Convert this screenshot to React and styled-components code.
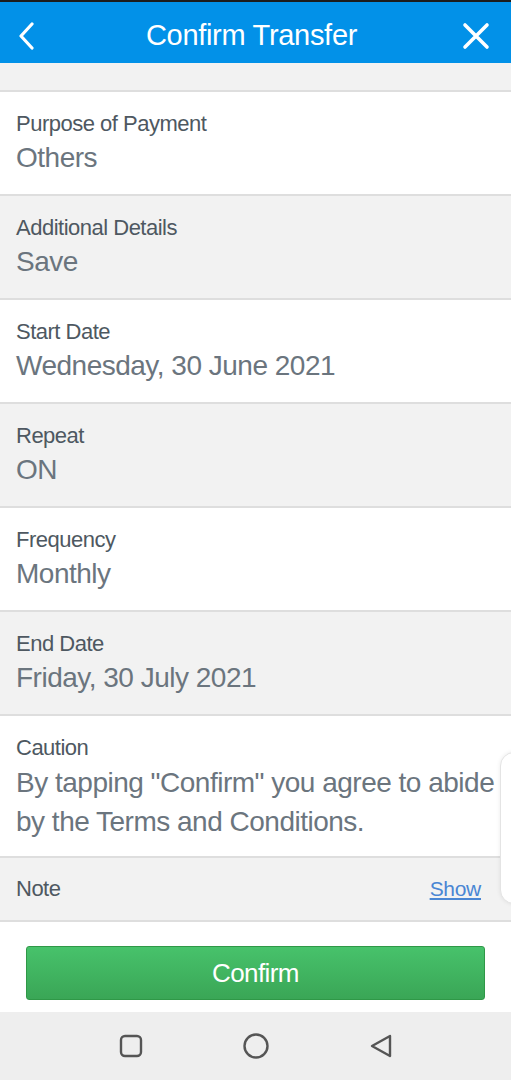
import React from "react";
import styled, { createGlobalStyle } from "styled-components";

const GlobalStyle = createGlobalStyle`
  html, body {
    margin: 0;
    padding: 0;
    background: #ffffff;
  }
  body {
    font-family: "Liberation Sans", Arial, sans-serif;
    -webkit-font-smoothing: antialiased;
  }
`;

const Screen = styled.div`
  width: 511px;
  height: 1080px;
  display: flex;
  flex-direction: column;
  position: relative;
  overflow: hidden;
  background: #ffffff;
`;

const StatusLine = styled.div`
  height: 2px;
  background: #1c1c1c;
`;

const Header = styled.header`
  height: 61px;
  box-sizing: border-box;
  background: #0291e8;
  display: flex;
  align-items: center;
  justify-content: space-between;
  padding: 6px 20px 0 12px;
  color: #ffffff;
`;

const Title = styled.h1`
  margin: 0;
  font-size: 29px;
  font-weight: 400;
  letter-spacing: -0.3px;
`;

const IconButton = styled.button`
  width: 30px;
  height: 30px;
  padding: 0;
  border: none;
  background: none;
  display: flex;
  align-items: center;
  justify-content: center;
`;

const Spacer = styled.div`
  height: 27px;
  background: #f2f2f2;
  border-bottom: 2px solid #dedede;
`;

const Row = styled.div`
  background: ${({ $shade }) => ($shade ? "#f2f2f2" : "#ffffff")};
  padding: ${({ $compact }) => ($compact ? "19px 30px 19px 16px" : "20px 16px")};
  border-bottom: 2px solid #dedede;
  display: flex;
  flex-direction: ${({ $compact }) => ($compact ? "row" : "column")};
  justify-content: ${({ $compact }) => ($compact ? "space-between" : "flex-start")};
  gap: ${({ $compact }) => ($compact ? "0" : "6px")};
`;

const Label = styled.div`
  font-size: 22px;
  line-height: 24px;
  color: #4e5861;
  letter-spacing: -0.5px;
`;

const Value = styled.div`
  font-size: 28px;
  line-height: ${({ $multi }) => ($multi ? "39px" : "32px")};
  margin: ${({ $multi }) => ($multi ? "-3px 0 -5px" : "0")};
  color: #6b757e;
  letter-spacing: -0.5px;
`;

const ShowLink = styled.a`
  font-size: 21px;
  line-height: 24px;
  color: #4a86d4;
  text-decoration: underline;
  letter-spacing: -0.3px;
`;

const Footer = styled.div`
  flex: 1;
  background: #ffffff;
  padding: 24px 26px 0;
`;

const ConfirmButton = styled.button`
  width: 100%;
  height: 54px;
  border: 1px solid #2f9847;
  border-radius: 3px;
  background: linear-gradient(#47c26b, #3aa656);
  color: #ffffff;
  font-family: "Liberation Sans", Arial, sans-serif;
  font-size: 26px;
  letter-spacing: -0.6px;
`;

const NavBar = styled.nav`
  height: 68px;
  background: #eeeeee;
  display: flex;
  align-items: center;
  justify-content: center;
  gap: 99px;
`;

const SideCard = styled.div`
  position: absolute;
  left: 500px;
  top: 752px;
  width: 40px;
  height: 150px;
  border-radius: 14px;
  background: #ffffff;
  border: 1px solid #e4e4e4;
  box-shadow: 0 0 4px rgba(0, 0, 0, 0.08);
`;

const details = [
  { label: "Purpose of Payment", value: "Others" },
  { label: "Additional Details", value: "Save" },
  { label: "Start Date", value: "Wednesday, 30 June 2021" },
  { label: "Repeat", value: "ON" },
  { label: "Frequency", value: "Monthly" },
  { label: "End Date", value: "Friday, 30 July 2021" },
];

const App = () => {
  return (
    <>
      <GlobalStyle />
      <Screen>
        <StatusLine />
        <Header>
          <IconButton aria-label="Back">
            <svg width="20" height="28" viewBox="0 0 20 28">
              <path d="M15 2 L4 14 L15 26" fill="none" stroke="#fff" strokeWidth="3.2" strokeLinecap="round" strokeLinejoin="round" />
            </svg>
          </IconButton>
          <Title>Confirm Transfer</Title>
          <IconButton aria-label="Close">
            <svg width="28" height="28" viewBox="0 0 28 28">
              <path d="M3 3 L25 25 M25 3 L3 25" fill="none" stroke="#fff" strokeWidth="3.6" strokeLinecap="round" />
            </svg>
          </IconButton>
        </Header>
        <Spacer />

        {details.map((item, i) => (
          <Row key={item.label} $shade={i % 2 === 1}>
            <Label>{item.label}</Label>
            <Value>{item.value}</Value>
          </Row>
        ))}

        <Row>
          <Label>Caution</Label>
          <Value $multi>
            By tapping "Confirm" you agree to abide
            <br />
            by the Terms and Conditions.
          </Value>
        </Row>

        <Row $shade $compact>
          <Label>Note</Label>
          <ShowLink href="#">Show</ShowLink>
        </Row>

        <Footer>
          <ConfirmButton>Confirm</ConfirmButton>
        </Footer>

        <NavBar>
          <svg width="24" height="24" viewBox="0 0 24 24">
            <rect x="2" y="2" width="20" height="20" rx="4" fill="none" stroke="#555" strokeWidth="2.4" />
          </svg>
          <svg width="28" height="28" viewBox="0 0 28 28">
            <circle cx="14" cy="14" r="11.5" fill="none" stroke="#555" strokeWidth="2.4" />
          </svg>
          <svg width="24" height="26" viewBox="0 0 24 26">
            <path d="M21 3 L3 13 L21 23 Z" fill="none" stroke="#555" strokeWidth="2.4" strokeLinejoin="round" />
          </svg>
        </NavBar>

        <SideCard />
      </Screen>
    </>
  );
};

export default App;
